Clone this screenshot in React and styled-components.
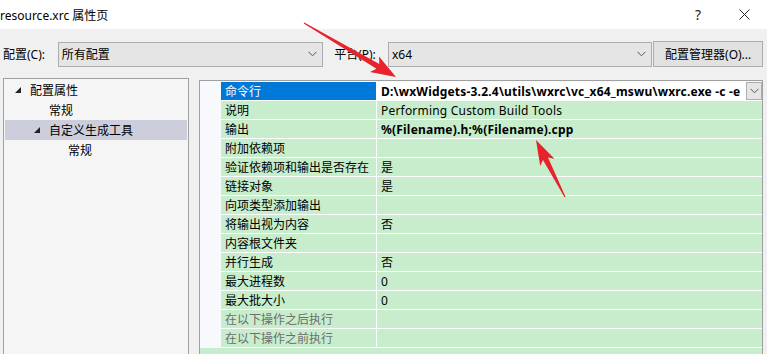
import styled, { createGlobalStyle } from "styled-components";

const GlobalStyle = createGlobalStyle`
  html, body {
    margin: 0;
    padding: 0;
    height: 100%;
    overflow: hidden;
  }
  #root {
    height: 100%;
  }
`

const FONT = `"Noto Sans", "Noto Sans CJK SC", sans-serif`

const Page = styled.div`
  position: relative;
  width: 767px;
  height: 354px;
  display: flex;
  flex-direction: column;
  font-family: ${FONT};
  font-size: 12px;
  color: #000;
  overflow: hidden;
`

const TitleBar = styled.div`
  height: 29px;
  background: #fff;
  display: flex;
  align-items: center;
`

const Title = styled.div`
  flex: 1;
  font-size: 12px;
`

const WinButton = styled.div`
  width: 46px;
  height: 29px;
  display: flex;
  align-items: center;
  justify-content: center;
  font-size: 14px;
  color: #222;
`

const Content = styled.div`
  flex: 1;
  min-height: 0;
  background: #f0f0f0;
  padding: 12px 4px 0 3px;
  display: flex;
  flex-direction: column;
`

const Toolbar = styled.div`
  height: 26px;
  display: flex;
  align-items: center;
`

const Label = styled.div`
  width: ${p => p.$w}px;
  margin-left: ${p => p.$ml || 0}px;
  white-space: nowrap;
`

const Select = styled.div`
  width: ${p => p.$w}px;
  height: 25px;
  box-sizing: border-box;
  border: 1px solid #adadad;
  background: #e5e5e5;
  display: flex;
  align-items: center;
  padding: 0 5px 0 3px;
`

const SelectText = styled.div`
  flex: 1;
`

const Button = styled.div`
  width: 110px;
  height: 26px;
  margin-left: 1px;
  box-sizing: border-box;
  border: 1px solid #adadad;
  background: #e1e1e1;
  display: flex;
  align-items: center;
  justify-content: center;
`

const Main = styled.div`
  flex: 1;
  min-height: 0;
  margin-top: 11px;
  display: flex;
  gap: 10px;
`

const Tree = styled.div`
  width: 186px;
  box-sizing: border-box;
  border: 1px solid #a0a0a0;
  border-bottom: none;
  background: #f5f5f5;
  padding: 1px 1px 0;
`

const TreeItem = styled.div`
  height: 20px;
  display: flex;
  align-items: center;
  padding-left: ${p => 10 + p.$level * 19}px;
  background: ${p => (p.$selected ? "#cccedb" : "transparent")};
`

const Toggle = styled.div`
  width: 15px;
  display: flex;
  align-items: center;
`

const Grid = styled.div`
  flex: 1;
  margin-top: 2px;
  box-sizing: border-box;
  border: 1px solid #a0a0a0;
  border-bottom: none;
  background: #f7f9fd;
  padding-top: 1px;
  display: flex;
  flex-direction: column;
`

const Row = styled.div`
  height: 19px;
  display: flex;
  padding-left: 21px;
`

const NameCell = styled.div`
  width: 156px;
  box-sizing: border-box;
  border-right: 1px solid #fff;
  border-bottom: 1px solid #fff;
  padding-left: 4px;
  display: flex;
  align-items: center;
  white-space: nowrap;
  background: ${p => (p.$selected ? "#0078d7" : "#c7edcc")};
  color: ${p => (p.$selected ? "#fff" : p.$disabled ? "#6d6d6d" : "#000")};
`

const ValueCell = styled.div`
  flex: 1;
  min-width: 0;
  box-sizing: border-box;
  border-bottom: 1px solid #fff;
  display: flex;
  align-items: center;
  background: ${p => (p.$selected ? "#fff" : "#c7edcc")};
  font-weight: ${p => (p.$bold ? 700 : 400)};
`

const ValueText = styled.div`
  flex: 1;
  min-width: 0;
  padding-left: 4px;
  white-space: nowrap;
  overflow: hidden;
  letter-spacing: 0.2px;
`

const CellDrop = styled.div`
  width: 16px;
  height: 18px;
  box-sizing: border-box;
  border: 1px solid #adadad;
  background: #e5e5e5;
  display: flex;
  align-items: center;
  justify-content: center;
`

const GridFooter = styled.div`
  flex: 1;
  background: #c7edcc;
`

const Overlay = styled.svg`
  position: absolute;
  left: 0;
  top: 0;
  pointer-events: none;
`

const Chevron = () => (
  <svg width="9" height="6" viewBox="0 0 9 6">
    <polyline points="0.5,0.8 4.5,4.8 8.5,0.8" fill="none" stroke="#555" strokeWidth="1" />
  </svg>
)

const Tri = () => (
  <svg width="6" height="6" viewBox="0 0 6 6">
    <polygon points="6,0 6,6 0,6" fill="#222" />
  </svg>
)

// tapered arrow like a screenshot-tool annotation
const arrowPoints = (tx, ty, px, py, head, wing) => {
  const dx = px - tx
  const dy = py - ty
  const len = Math.hypot(dx, dy)
  const ux = dx / len
  const uy = dy / len
  const nx = -uy
  const ny = ux
  const bx = px - ux * head
  const by = py - uy * head
  const wx = bx - ux * 4
  const wy = by - uy * 4
  const pts = [
    [tx + nx * 0.6, ty + ny * 0.6],
    [bx + nx * 2.8, by + ny * 2.8],
    [wx + nx * wing, wy + ny * wing],
    [px, py],
    [wx - nx * wing, wy - ny * wing],
    [bx - nx * 2.8, by - ny * 2.8],
    [tx - nx * 0.6, ty - ny * 0.6],
  ]
  return pts.map(p => p.map(v => v.toFixed(1)).join(",")).join(" ")
}

const rows = [
  { name: "命令行", value: "D:\\wxWidgets-3.2.4\\utils\\wxrc\\vc_x64_mswu\\wxrc.exe -c -e", selected: true, bold: true },
  { name: "说明", value: "Performing Custom Build Tools" },
  { name: "输出", value: "%(Filename).h;%(Filename).cpp", bold: true },
  { name: "附加依赖项", value: "" },
  { name: "验证依赖项和输出是否存在", value: "是" },
  { name: "链接对象", value: "是" },
  { name: "向项类型添加输出", value: "" },
  { name: "将输出视为内容", value: "否" },
  { name: "内容根文件夹", value: "" },
  { name: "并行生成", value: "否" },
  { name: "最大进程数", value: "0" },
  { name: "最大批大小", value: "0" },
  { name: "在以下操作之后执行", value: "", disabled: true },
  { name: "在以下操作之前执行", value: "", disabled: true },
]

const tree = [
  { label: "配置属性", level: 0, open: true },
  { label: "常规", level: 1 },
  { label: "自定义生成工具", level: 1, open: true, selected: true },
  { label: "常规", level: 2 },
]

export default function App() {
  return (
    <>
      <GlobalStyle />
      <Page>
        <TitleBar>
          <Title>resource.xrc 属性页</Title>
          <WinButton>?</WinButton>
          <WinButton>
            <svg width="11" height="11" viewBox="0 0 11 11">
              <path d="M0.5 0.5 L10.5 10.5 M10.5 0.5 L0.5 10.5" stroke="#222" strokeWidth="1" />
            </svg>
          </WinButton>
        </TitleBar>
        <Content>
          <Toolbar>
            <Label $w={55}>配置(C):</Label>
            <Select $w={266}>
              <SelectText>所有配置</SelectText>
              <Chevron />
            </Select>
            <Label $w={54} $ml={11}>平台(P):</Label>
            <Select $w={265}>
              <SelectText>x64</SelectText>
              <Chevron />
            </Select>
            <Button>配置管理器(O)...</Button>
          </Toolbar>
          <Main>
            <Tree>
              {tree.map((t, i) => (
                <TreeItem key={i} $level={t.level} $selected={t.selected}>
                  <Toggle>{t.open && <Tri />}</Toggle>
                  {t.label}
                </TreeItem>
              ))}
            </Tree>
            <Grid>
              {rows.map((r, i) => (
                <Row key={i}>
                  <NameCell $selected={r.selected} $disabled={r.disabled}>{r.name}</NameCell>
                  <ValueCell $selected={r.selected} $bold={r.bold}>
                    <ValueText>{r.value}</ValueText>
                    {r.selected && (
                      <CellDrop>
                        <Chevron />
                      </CellDrop>
                    )}
                  </ValueCell>
                </Row>
              ))}
              <GridFooter />
            </Grid>
          </Main>
        </Content>
        <Overlay width="767" height="354">
          <polygon points={arrowPoints(304, 23, 396, 77, 21, 9)} fill="#e8232b" />
          <polygon points={arrowPoints(565, 197, 536, 140, 21, 8)} fill="#e8232b" />
        </Overlay>
      </Page>
    </>
  )
}
